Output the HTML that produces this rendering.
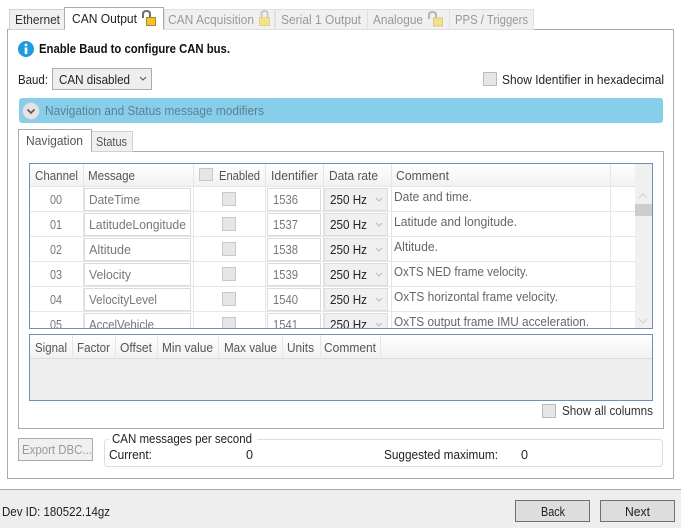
<!DOCTYPE html>
<html>
<head>
<meta charset="utf-8">
<style>
html,body{margin:0;padding:0;background:#fff;width:681px;height:528px;overflow:hidden}
svg{display:block}
text{font-family:"Liberation Sans",sans-serif;font-size:13px;fill:#333}
.g{fill:#999}
.d{fill:#777}
.k{fill:#111}
.c{fill:#666}
.h{fill:#555}
.ln{stroke:#e6e6e6;stroke-width:1;fill:none}
.box{fill:#fff;stroke:#dcdcdc}
.cb{fill:#e6e6e6;stroke:#c8c8c8}
.cmb{fill:#f0f0f0;stroke:#dcdcdc}
.chev{fill:none;stroke:#bbb;stroke-width:1}
</style>
</head>
<body>
<svg width="681" height="528" viewBox="0 0 681 528" xmlns="http://www.w3.org/2000/svg">
<defs>
<linearGradient id="hd" x1="0" y1="0" x2="0" y2="1"><stop offset="0" stop-color="#fff"/><stop offset="1" stop-color="#f0f1f2"/></linearGradient>
<clipPath id="tc"><rect x="30" y="164" width="622" height="164"/></clipPath>
</defs>
<rect width="681" height="528" fill="#fff"/>

<!-- main panel -->
<rect x="7.5" y="29.5" width="666" height="449" fill="#fff" stroke="#ababab"/>

<!-- top tabs -->
<rect x="9.5" y="9.5" width="55" height="20" fill="#f0f0f0" stroke="#d0d0d0"/>
<text x="15" y="24" textLength="45" lengthAdjust="spacingAndGlyphs">Ethernet</text>
<rect x="164.5" y="9.5" width="110" height="20" fill="#f0f0f0" stroke="#e0e0e0"/>
<rect x="275.5" y="9.5" width="92" height="20" fill="#f0f0f0" stroke="#e0e0e0"/>
<rect x="367.5" y="9.5" width="82" height="20" fill="#f0f0f0" stroke="#e0e0e0"/>
<rect x="449.5" y="9.5" width="84" height="20" fill="#f0f0f0" stroke="#e0e0e0"/>
<rect x="64.5" y="7.5" width="99" height="23" fill="#fff" stroke="none"/>
<path d="M64.5 29.5V7.5H163.5V29.5" fill="none" stroke="#ababab"/>
<text x="72" y="23" textLength="65" lengthAdjust="spacingAndGlyphs" style="fill:#222">CAN Output</text>
<text x="168" y="24" class="g" textLength="86" lengthAdjust="spacingAndGlyphs">CAN Acquisition</text>
<text x="281" y="24" class="g" textLength="80" lengthAdjust="spacingAndGlyphs">Serial 1 Output</text>
<text x="373" y="24" class="g" textLength="50" lengthAdjust="spacingAndGlyphs">Analogue</text>
<text x="455" y="24" class="g" textLength="73" lengthAdjust="spacingAndGlyphs">PPS / Triggers</text>

<!-- locks -->
<path d="M143 18V14Q143 11 146.5 11Q150 11 150 14V17" fill="none" stroke="#6e6e6e" stroke-width="2"/>
<rect x="146.5" y="17.5" width="9" height="8" fill="#efc22f" stroke="#a98a20"/>
<path d="M261.5 17V14Q261.5 11 264.5 11Q267.5 11 267.5 14V17" fill="none" stroke="#c8c8c8" stroke-width="2"/>
<rect x="259.5" y="17.5" width="10" height="8" fill="#f5e08c" stroke="#e3d08a"/>
<path d="M429 19V15Q429 12 432.5 12Q436 12 436 15V18" fill="none" stroke="#b5b5b5" stroke-width="2"/>
<rect x="433.5" y="18" width="9" height="8" fill="#f5e08c" stroke="#d9c680"/>

<!-- info -->
<circle cx="26" cy="49" r="8" fill="#1b9ce0"/>
<circle cx="26" cy="45" r="1.4" fill="#fff"/>
<rect x="24.7" y="47.5" width="2.6" height="6.5" fill="#fff"/>
<text x="39" y="53" textLength="191" lengthAdjust="spacingAndGlyphs" style="fill:#111;font-weight:bold">Enable Baud to configure CAN bus.</text>

<!-- baud -->
<text x="18" y="84" textLength="30" lengthAdjust="spacingAndGlyphs" style="fill:#222">Baud:</text>
<rect x="52.5" y="68.5" width="99" height="21" fill="#eee" stroke="#acacac"/>
<text x="59" y="84" textLength="71" lengthAdjust="spacingAndGlyphs" style="fill:#222">CAN disabled</text>
<path d="M140 77l3 3l3-3" fill="none" stroke="#555"/>

<rect x="483.5" y="72.5" width="13" height="13" fill="#e6e6e6" stroke="#bbb"/>
<text x="502" y="84" textLength="162" lengthAdjust="spacingAndGlyphs" style="fill:#222">Show Identifier in hexadecimal</text>

<!-- blue bar -->
<rect x="19" y="98" width="644" height="25" rx="3" fill="#87ceeb"/>
<circle cx="31" cy="111" r="8.5" fill="#e4e4e4" stroke="#b9c8d0"/>
<path d="M27.5 109.5l3.5 3.5l3.5-3.5" fill="none" stroke="#555" stroke-width="1.6"/>
<text x="45" y="115" textLength="219" lengthAdjust="spacingAndGlyphs" style="fill:#5f7f90">Navigation and Status message modifiers</text>

<!-- inner tabs/panel -->
<rect x="18.5" y="151.5" width="645" height="277" fill="#fff" stroke="#ababab"/>
<rect x="91.5" y="131.5" width="41" height="20" fill="#f0f0f0" stroke="#d0d0d0"/>
<text x="96" y="146" textLength="31" lengthAdjust="spacingAndGlyphs" style="fill:#555">Status</text>
<rect x="18.5" y="129.5" width="73" height="23" fill="#fff" stroke="none"/>
<path d="M18.5 151.5V129.5H91.5V151.5" fill="none" stroke="#ababab"/>
<text x="26" y="145" textLength="57" lengthAdjust="spacingAndGlyphs" style="fill:#555">Navigation</text>

<!-- table 1 -->
<rect x="29.5" y="163.5" width="623" height="165" fill="#fff" stroke="#7090b5"/>
<g clip-path="url(#tc)">
<rect x="30" y="164" width="605" height="22" fill="url(#hd)"/>
<path class="ln" d="M30 186.5H635M83.5 164V186M193.5 164V186M265.5 164V186M323.5 164V186M391.5 164V328M610.5 164V328"/>
<path class="ln" d="M30 211.5H635M30 236.5H635M30 261.5H635M30 286.5H635M30 311.5H635"/>
<path class="ln" d="M83.5 187V328M193.5 187V328M265.5 187V328M323.5 187V328"/>

<text x="35" y="180" class="h" textLength="43" lengthAdjust="spacingAndGlyphs">Channel</text>
<text x="88" y="180" class="h" textLength="47" lengthAdjust="spacingAndGlyphs">Message</text>
<rect x="199.5" y="168.5" width="13" height="12" class="cb"/>
<text x="219" y="180" class="h" textLength="41" lengthAdjust="spacingAndGlyphs">Enabled</text>
<text x="271" y="180" class="h" textLength="47" lengthAdjust="spacingAndGlyphs">Identifier</text>
<text x="329" y="180" class="h" textLength="49" lengthAdjust="spacingAndGlyphs">Data rate</text>
<text x="396" y="180" class="h" textLength="53" lengthAdjust="spacingAndGlyphs">Comment</text>

<!-- row 0 -->
<g>
<text x="50" y="204" class="d" textLength="12" lengthAdjust="spacingAndGlyphs">00</text>
<rect x="84.5" y="188.5" width="106" height="22" class="box"/>
<text x="89" y="204" class="d" textLength="51" lengthAdjust="spacingAndGlyphs">DateTime</text>
<rect x="222.5" y="192.5" width="13" height="13" class="cb"/>
<rect x="267.5" y="188.5" width="53" height="22" class="box"/>
<text x="273" y="204" class="d" textLength="25" lengthAdjust="spacingAndGlyphs">1536</text>
<rect x="324.5" y="188.5" width="63" height="22" class="cmb"/>
<text x="330" y="204" textLength="37" lengthAdjust="spacingAndGlyphs" style="fill:#222">250 Hz</text>
<path class="chev" d="M376 198l3 3l3-3"/>
<text x="394" y="201" class="c" textLength="78" lengthAdjust="spacingAndGlyphs">Date and time.</text>
</g>
<!-- row 1 -->
<g>
<text x="50" y="229" class="d" textLength="12" lengthAdjust="spacingAndGlyphs">01</text>
<rect x="84.5" y="213.5" width="106" height="22" class="box"/>
<text x="89" y="229" class="d" textLength="97" lengthAdjust="spacingAndGlyphs">LatitudeLongitude</text>
<rect x="222.5" y="217.5" width="13" height="13" class="cb"/>
<rect x="267.5" y="213.5" width="53" height="22" class="box"/>
<text x="273" y="229" class="d" textLength="25" lengthAdjust="spacingAndGlyphs">1537</text>
<rect x="324.5" y="213.5" width="63" height="22" class="cmb"/>
<text x="330" y="229" textLength="37" lengthAdjust="spacingAndGlyphs" style="fill:#222">250 Hz</text>
<path class="chev" d="M376 223l3 3l3-3"/>
<text x="394" y="226" class="c" textLength="123" lengthAdjust="spacingAndGlyphs">Latitude and longitude.</text>
</g>
<!-- row 2 -->
<g>
<text x="50" y="254" class="d" textLength="12" lengthAdjust="spacingAndGlyphs">02</text>
<rect x="84.5" y="238.5" width="106" height="22" class="box"/>
<text x="89" y="254" class="d" textLength="42" lengthAdjust="spacingAndGlyphs">Altitude</text>
<rect x="222.5" y="242.5" width="13" height="13" class="cb"/>
<rect x="267.5" y="238.5" width="53" height="22" class="box"/>
<text x="273" y="254" class="d" textLength="25" lengthAdjust="spacingAndGlyphs">1538</text>
<rect x="324.5" y="238.5" width="63" height="22" class="cmb"/>
<text x="330" y="254" textLength="37" lengthAdjust="spacingAndGlyphs" style="fill:#222">250 Hz</text>
<path class="chev" d="M376 248l3 3l3-3"/>
<text x="394" y="251" class="c" textLength="44" lengthAdjust="spacingAndGlyphs">Altitude.</text>
</g>
<!-- row 3 -->
<g>
<text x="50" y="279" class="d" textLength="12" lengthAdjust="spacingAndGlyphs">03</text>
<rect x="84.5" y="263.5" width="106" height="22" class="box"/>
<text x="89" y="279" class="d" textLength="42" lengthAdjust="spacingAndGlyphs">Velocity</text>
<rect x="222.5" y="267.5" width="13" height="13" class="cb"/>
<rect x="267.5" y="263.5" width="53" height="22" class="box"/>
<text x="273" y="279" class="d" textLength="25" lengthAdjust="spacingAndGlyphs">1539</text>
<rect x="324.5" y="263.5" width="63" height="22" class="cmb"/>
<text x="330" y="279" textLength="37" lengthAdjust="spacingAndGlyphs" style="fill:#222">250 Hz</text>
<path class="chev" d="M376 273l3 3l3-3"/>
<text x="394" y="276" class="c" textLength="134" lengthAdjust="spacingAndGlyphs">OxTS NED frame velocity.</text>
</g>
<!-- row 4 -->
<g>
<text x="50" y="304" class="d" textLength="12" lengthAdjust="spacingAndGlyphs">04</text>
<rect x="84.5" y="288.5" width="106" height="22" class="box"/>
<text x="89" y="304" class="d" textLength="68" lengthAdjust="spacingAndGlyphs">VelocityLevel</text>
<rect x="222.5" y="292.5" width="13" height="13" class="cb"/>
<rect x="267.5" y="288.5" width="53" height="22" class="box"/>
<text x="273" y="304" class="d" textLength="25" lengthAdjust="spacingAndGlyphs">1540</text>
<rect x="324.5" y="288.5" width="63" height="22" class="cmb"/>
<text x="330" y="304" textLength="37" lengthAdjust="spacingAndGlyphs" style="fill:#222">250 Hz</text>
<path class="chev" d="M376 298l3 3l3-3"/>
<text x="394" y="301" class="c" textLength="164" lengthAdjust="spacingAndGlyphs">OxTS horizontal frame velocity.</text>
</g>
<!-- row 5 -->
<g>
<text x="50" y="329" class="d" textLength="12" lengthAdjust="spacingAndGlyphs">05</text>
<rect x="84.5" y="313.5" width="106" height="22" class="box"/>
<text x="89" y="329" class="d" textLength="65" lengthAdjust="spacingAndGlyphs">AccelVehicle</text>
<rect x="222.5" y="317.5" width="13" height="13" class="cb"/>
<rect x="267.5" y="313.5" width="53" height="22" class="box"/>
<text x="273" y="329" class="d" textLength="25" lengthAdjust="spacingAndGlyphs">1541</text>
<rect x="324.5" y="313.5" width="63" height="22" class="cmb"/>
<text x="330" y="329" textLength="37" lengthAdjust="spacingAndGlyphs" style="fill:#222">250 Hz</text>
<path class="chev" d="M376 323l3 3l3-3"/>
<text x="394" y="326" class="c" textLength="195" lengthAdjust="spacingAndGlyphs">OxTS output frame IMU acceleration.</text>
</g>

<!-- scrollbar -->
<rect x="635" y="164" width="17" height="164" fill="#f0f0f0"/>
<rect x="635" y="204" width="17" height="12" fill="#cdcdcd"/>
<path d="M639 198l4-4l4 4" fill="none" stroke="#cfcfcf"/>
<path d="M639 319l4 4l4-4" fill="none" stroke="#cfcfcf"/>
</g>
<rect x="29.5" y="163.5" width="623" height="165" fill="none" stroke="#7090b5"/>

<!-- table 2 -->
<rect x="29.5" y="334.5" width="623" height="66" fill="#eee" stroke="#7090b5"/>
<rect x="30" y="335" width="622" height="23" fill="url(#hd)"/>
<path d="M30 358.5H652" stroke="#dcdcdc"/>
<path class="ln" d="M72.5 335V358M115.5 335V358M157.5 335V358M218.5 335V358M282.5 335V358M320.5 335V358M380.5 335V358"/>
<text x="35" y="352" class="h" textLength="32" lengthAdjust="spacingAndGlyphs">Signal</text>
<text x="77" y="352" class="h" textLength="33" lengthAdjust="spacingAndGlyphs">Factor</text>
<text x="120" y="352" class="h" textLength="32" lengthAdjust="spacingAndGlyphs">Offset</text>
<text x="162" y="352" class="h" textLength="51" lengthAdjust="spacingAndGlyphs">Min value</text>
<text x="224" y="352" class="h" textLength="53" lengthAdjust="spacingAndGlyphs">Max value</text>
<text x="287" y="352" class="h" textLength="27" lengthAdjust="spacingAndGlyphs">Units</text>
<text x="324" y="352" class="h" textLength="52" lengthAdjust="spacingAndGlyphs">Comment</text>

<rect x="542.5" y="404.5" width="13" height="13" fill="#e6e6e6" stroke="#bbb"/>
<text x="562" y="415" textLength="91" lengthAdjust="spacingAndGlyphs" style="fill:#333">Show all columns</text>

<!-- export -->
<rect x="18.5" y="438.5" width="74" height="22" fill="#f0f0f0" stroke="#aaa"/>
<text x="22" y="454" class="g" textLength="70" lengthAdjust="spacingAndGlyphs">Export DBC...</text>

<!-- group -->
<rect x="104.5" y="439.5" width="558" height="27" rx="3" fill="#fff" stroke="#d5dfe5"/>
<rect x="109" y="436" width="148" height="6" fill="#fff"/>
<text x="112" y="443" textLength="140" lengthAdjust="spacingAndGlyphs" style="fill:#222">CAN messages per second</text>
<text x="109" y="459" textLength="43" lengthAdjust="spacingAndGlyphs" style="fill:#222">Current:</text>
<text x="246" y="459" textLength="7" lengthAdjust="spacingAndGlyphs" style="fill:#222">0</text>
<text x="384" y="459" textLength="114" lengthAdjust="spacingAndGlyphs" style="fill:#222">Suggested maximum:</text>
<text x="521" y="459" textLength="7" lengthAdjust="spacingAndGlyphs" style="fill:#222">0</text>

<!-- footer -->
<rect x="0" y="489" width="681" height="39" fill="#eee"/>
<path d="M0 489.5H681" stroke="#aaa"/>
<text x="2" y="516" textLength="108" lengthAdjust="spacingAndGlyphs" style="fill:#222">Dev ID: 180522.14gz</text>
<rect x="515.5" y="500.5" width="74" height="21" fill="#ddd" stroke="#707070"/>
<text x="541" y="516" textLength="24" lengthAdjust="spacingAndGlyphs" style="fill:#222">Back</text>
<rect x="600.5" y="500.5" width="74" height="21" fill="#ddd" stroke="#707070"/>
<text x="625" y="516" textLength="25" lengthAdjust="spacingAndGlyphs" style="fill:#222">Next</text>
</svg>
</body>
</html>
